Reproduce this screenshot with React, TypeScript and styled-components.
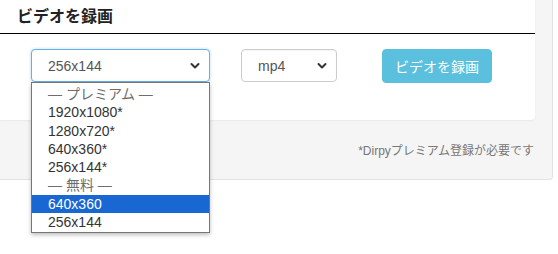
import React from 'react'
import styled, { createGlobalStyle } from 'styled-components'

const GlobalStyle = createGlobalStyle`
  html, body {
    margin: 0;
    padding: 0;
    background: #ffffff;
    min-height: 100vh;
    overflow: visible;
  }
  #root {
    min-height: 100vh;
  }
  body {
    font-family: "Liberation Sans", Arial, "Noto Sans CJK JP", sans-serif;
    color: #333;
  }
`

const Well = styled.section`
  position: relative;
  width: 553px;
  height: 180px;
  background-color: #f5f5f5;
  border-right: 1px solid #e3e3e3;
  border-bottom: 1px solid #e3e3e3;
  border-bottom-right-radius: 4px;
  display: flex;
  flex-direction: column;
  box-sizing: border-box;
`

const Card = styled.div`
  position: relative;
  z-index: 2;
  width: 535px;
  height: 120px;
  background-color: #ffffff;
  border-bottom-right-radius: 4px;
  box-shadow: 0 1px 2px rgba(0, 0, 0, 0.05);
  display: flex;
  flex-direction: column;
`

const Header = styled.h3`
  margin: 0;
  height: 29px;
  padding-left: 17px;
  padding-bottom: 4px;
  display: flex;
  align-items: center;
  font-size: 16px;
  font-weight: 600;
  color: #222;
  border-bottom: 1px solid #000;
  box-sizing: content-box;
`

const Controls = styled.div`
  display: flex;
  align-items: flex-start;
  padding: 15px 0 0 31px;
`

const SelectWrap = styled.div`
  position: relative;
`

const SelectBox = styled.div<{ $width: number; $focused?: boolean }>`
  width: ${(p) => p.$width}px;
  height: 33px;
  box-sizing: border-box;
  border: 1px solid ${(p) => (p.$focused ? '#66afe9' : '#cccccc')};
  border-radius: 4px;
  box-shadow: ${(p) =>
    p.$focused ? '0 0 3px rgba(102, 175, 233, 0.5)' : 'inset 0 1px 1px rgba(0,0,0,0.04)'};
  background: #fff;
  display: flex;
  align-items: center;
  justify-content: space-between;
  padding: 0 8px 0 16px;
  font-size: 14px;
  color: #555;
`

const Chevron = () => (
  <svg width="12" height="8" viewBox="0 0 12 8">
    <polyline
      points="2.5,2 6,5.5 9.5,2"
      fill="none"
      stroke="#333"
      strokeWidth="2"
      strokeLinecap="round"
      strokeLinejoin="round"
    />
  </svg>
)

const Spacer = styled.div<{ $w: number }>`
  width: ${(p) => p.$w}px;
  flex-shrink: 0;
`

const RecordButton = styled.button`
  width: 110px;
  height: 34px;
  border: 1px solid #5bc0de;
  border-radius: 4px;
  background-color: #5bc0de;
  color: #fff;
  font-family: inherit;
  font-size: 14px;
  padding: 0;
  cursor: not-allowed;
`

const Footnote = styled.div`
  flex: 1;
  display: flex;
  align-items: center;
  justify-content: flex-end;
  padding-right: 18px;
  font-size: 12px;
  color: #777;
`

const OptionList = styled.ul`
  position: absolute;
  top: 33px;
  left: 0;
  width: 179px;
  margin: 0;
  padding: 2px 0 1px;
  list-style: none;
  background: #fff;
  border: 1px solid #767676;
  box-sizing: border-box;
  box-shadow: 0 2px 4px rgba(0, 0, 0, 0.25);
  z-index: 10;
`

const Option = styled.li<{ $selected?: boolean; $group?: boolean }>`
  height: 18.3px;
  line-height: 18.3px;
  padding-left: 16px;
  font-size: 14px;
  white-space: nowrap;
  color: ${(p) => (p.$selected ? '#fff' : p.$group ? '#6d6d6d' : '#333')};
  background: ${(p) => (p.$selected ? '#1967d2' : 'transparent')};
`

type Opt = { label: string; group?: boolean; selected?: boolean }

const options: Opt[] = [
  { label: '— プレミアム —', group: true },
  { label: '1920x1080*' },
  { label: '1280x720*' },
  { label: '640x360*' },
  { label: '256x144*' },
  { label: '— 無料 —', group: true },
  { label: '640x360', selected: true },
  { label: '256x144' },
]

const App: React.FC = () => {
  return (
    <>
      <GlobalStyle />
      <Well>
        <Card>
          <Header>ビデオを録画</Header>
          <Controls>
            <SelectWrap>
              <SelectBox $width={179} $focused>
                <span>256x144</span>
                <Chevron />
              </SelectBox>
              <OptionList>
                {options.map((o) => (
                  <Option key={o.label} $group={o.group} $selected={o.selected}>
                    {o.label}
                  </Option>
                ))}
              </OptionList>
            </SelectWrap>
            <Spacer $w={31} />
            <SelectBox $width={96}>
              <span>mp4</span>
              <Chevron />
            </SelectBox>
            <Spacer $w={45} />
            <RecordButton disabled>ビデオを録画</RecordButton>
          </Controls>
        </Card>
        <Footnote>*Dirpyプレミアム登録が必要です</Footnote>
      </Well>
    </>
  )
}

export default App
